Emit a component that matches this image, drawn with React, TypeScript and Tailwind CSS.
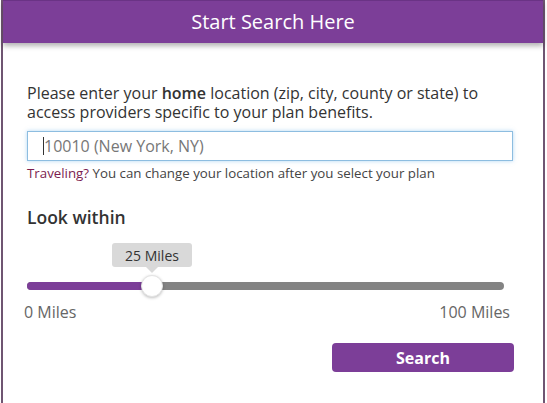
export default function App() {
  const value = 25;
  const pct = value / 100;
  const trackWidth = 477;
  const thumbX = Math.round(trackWidth * pct * 1.05);

  return (
    <div className="w-[547px] h-[403px] bg-white font-['Open_Sans',sans-serif] text-[#333]">
      <div className="ml-[1px] w-[544px] h-[403px] border-x-2 border-[#6f5572] bg-white">
        {/* Header */}
        <div className="relative h-[43px] bg-[#7c3e98] border-t border-[#6a3385] flex items-center justify-center shadow-[0_3px_5px_rgba(0,0,0,0.3)]">
          <h1 className="text-[20px] text-white leading-none -mt-[1px]">Start Search Here</h1>
        </div>

        <div className="px-[24px]">
          {/* Intro */}
          <p className="mt-[41px] text-[16px] leading-[19px] text-[#333]">
            Please enter your <b className="font-semibold">home</b> location (zip, city, county or state) to access providers specific to your plan benefits.
          </p>

          {/* Location input */}
          <div className="mt-[9px] w-[486px] h-[30px] border border-[#8dbde0] shadow-[0_0_4px_rgba(102,175,233,0.5)] flex items-center pl-[15px]">
            <span className="w-px h-[18px] bg-[#333]" />
            <span className="text-[16px] text-[#777] leading-none">10010 (New York, NY)</span>
          </div>

          <p className="mt-[4px] text-[13.3px] leading-[16px] text-[#444]">
            <span className="text-[#7b1d4f]">Traveling?</span> You can change your location after you select your plan
          </p>

          {/* Distance */}
          <h2 className="mt-[24px] text-[17.5px] leading-[24px] font-semibold text-[#333]">Look within</h2>

          <div className="relative mt-[14px] h-[58px] w-[477px]">
            <div
              className="absolute top-0 w-[80px] -translate-x-1/2 h-[24px] rounded-[3px] bg-[#d9d9d9] flex items-center justify-center text-[14px] text-[#333]"
              style={{ left: thumbX }}
            >
              25 Miles
              <span className="absolute left-1/2 -translate-x-1/2 top-[24px] w-0 h-0 border-x-[6px] border-x-transparent border-t-[6px] border-t-[#d9d9d9]" />
            </div>
            <div className="absolute top-[39px] left-0 w-[477px] h-[8px] rounded-full bg-[#838383] overflow-hidden">
              <div className="h-full bg-[#7c3e98]" style={{ width: thumbX }} />
            </div>
            <div
              className="absolute top-[32px] w-[22px] h-[22px] -translate-x-1/2 rounded-full bg-white border border-[#e4e4e4] shadow-[0_1px_3px_rgba(0,0,0,0.25)]"
              style={{ left: thumbX }}
            />
          </div>

          <div className="-mx-[3px] mt-[1px] w-[486px] flex justify-between text-[16px] leading-[20px] text-[#666]">
            <span>0 Miles</span>
            <span>100 Miles</span>
          </div>

          <div className="mt-[21px] w-[487px] flex justify-end">
            <button className="w-[182px] h-[29px] rounded-[4px] bg-[#7c3e98] text-white text-[16px] font-bold leading-none">
              Search
            </button>
          </div>
        </div>
      </div>
    </div>
  );
}
